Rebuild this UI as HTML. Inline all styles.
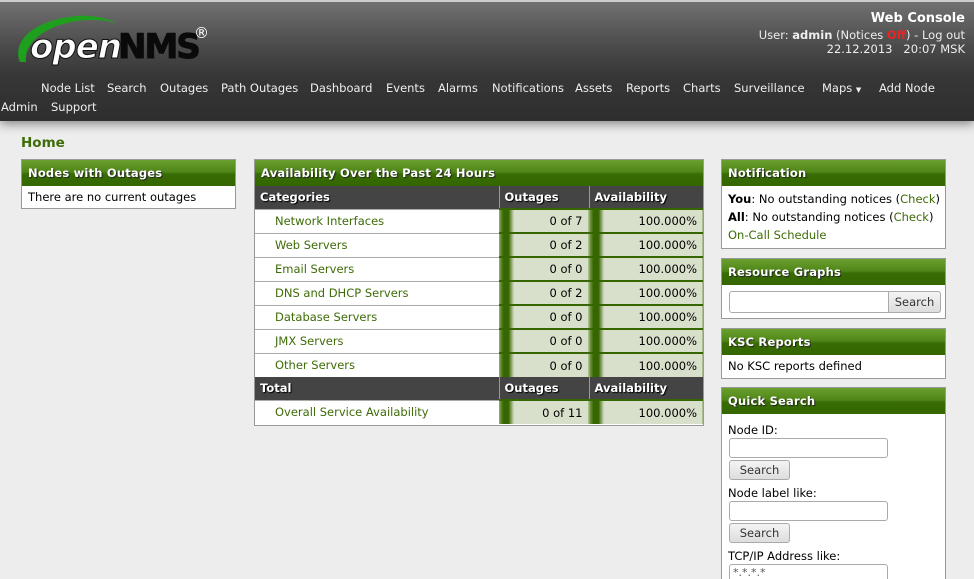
<!DOCTYPE html>
<html><head><meta charset="utf-8">
<style>
*{box-sizing:border-box}
html,body{margin:0;width:974px;height:579px;overflow:hidden}
body{background:#ededed;font-family:"DejaVu Sans","Liberation Sans",sans-serif;font-size:11.5px;color:#000;position:relative}
.hdr{position:absolute;left:0;top:0;width:974px;height:121px;background:linear-gradient(#717171 0,#4a4a4a 45px,#363636 75px,#2e2e2e 121px);border-top:2px solid #ccc;box-shadow:0 3px 10px rgba(0,0,0,.45)}
.a{position:absolute;white-space:nowrap}
.nav{color:#eee;font-size:11.5px}
.box{position:absolute;background:#fff;border:1px solid #999;overflow:hidden}
.tt{height:26px;background:linear-gradient(#6b9f2e 0,#4f8618 12px,#386c05 14px,#356600 26px);color:#fff;font-weight:bold;font-size:11.5px;padding:6px 0 0 6px;text-shadow:1px 1px 1px #222;letter-spacing:.2px}
.g{color:#3e6b06}
table{border-collapse:collapse;width:100%}
td{padding:0;height:24px;border-top:1px solid #aaa;font-size:11.5px}
th{background:#444;color:#fff;text-align:left;font-size:11.5px;height:23px;padding:0 0 0 5px;border-left:1px solid #999;text-shadow:1px 1px 1px #000}
th:first-child{border-left:none}
td.n{padding-left:20px;color:#3e6b06}
td.s{background:linear-gradient(90deg,#7fa050 0,#356600 4px,#356600 9px,#c8d4b4 14px,#d8e0cc 15px);text-align:right;padding-right:6px;border-left:1px solid #999;border-top:2px solid #356600}
input.t{position:absolute;height:20px;border:1px solid #aaa;border-radius:3px;background:#fff}
.btn{position:absolute;height:20px;border:1px solid #aaa;border-radius:3px;background:linear-gradient(#f4f4f4,#ddd);font-size:11.5px;color:#333;text-align:center;line-height:18px}
</style></head><body>
<div class="hdr"></div>
<svg class="a" style="left:12px;top:12px" width="210" height="55" viewBox="0 0 210 55">
<path d="M8 50 C0 30 20 8 65 4 C80 3 95 6 105 11 C90 7 70 7 55 11 C30 17 12 32 14 50 Z" fill="#1ea01e"/>
<text x="18" y="46" font-family="DejaVu Sans" font-weight="bold" font-style="italic" font-size="34" fill="#fff" stroke="#111" stroke-width="1" letter-spacing="-1">open</text>
<text x="106" y="46" font-family="DejaVu Sans" font-weight="bold" font-size="34" fill="#0a0a0a" stroke="#0a0a0a" stroke-width="1" letter-spacing="-2">NMS</text>
<text x="182" y="26" font-family="DejaVu Sans" font-size="15" fill="#fff">®</text>
</svg>
<div class="a" style="right:9px;top:11px;color:#fff;font-weight:bold;font-size:13px">Web Console</div>
<div class="a" style="right:9px;top:28px;color:#eee">User: <b>admin</b> (Notices <b style="color:#e22">Off</b>) - Log out</div>
<div class="a" style="right:9px;top:42px;color:#eee">22.12.2013 &nbsp; 20:07 MSK</div>
<div class="a nav" style="left:41px;top:81px">Node List</div>
<div class="a nav" style="left:107px;top:81px">Search</div>
<div class="a nav" style="left:160px;top:81px">Outages</div>
<div class="a nav" style="left:221px;top:81px">Path Outages</div>
<div class="a nav" style="left:310px;top:81px">Dashboard</div>
<div class="a nav" style="left:386px;top:81px">Events</div>
<div class="a nav" style="left:438px;top:81px">Alarms</div>
<div class="a nav" style="left:492px;top:81px">Notifications</div>
<div class="a nav" style="left:575px;top:81px">Assets</div>
<div class="a nav" style="left:626px;top:81px">Reports</div>
<div class="a nav" style="left:683px;top:81px">Charts</div>
<div class="a nav" style="left:734px;top:81px">Surveillance</div>
<div class="a nav" style="left:822px;top:81px">Maps <span style="font-size:7px">▼</span></div>
<div class="a nav" style="left:879px;top:81px">Add Node</div>
<div class="a nav" style="left:1px;top:100px">Admin</div>
<div class="a nav" style="left:51px;top:100px">Support</div>

<div class="a" style="left:21px;top:135px;font-weight:bold;font-size:13.5px;color:#3e6b06">Home</div>

<div class="box" style="left:21px;top:159px;width:215px;height:50px"><div class="tt">Nodes with Outages</div><div style="padding:4px 6px">There are no current outages</div></div>

<div class="box" style="left:254px;top:159px;width:450px;height:267px"><div class="tt">Availability Over the Past 24 Hours</div>
<table>
<tr><th style="width:244px">Categories</th><th style="width:90px">Outages</th><th>Availability</th></tr>
<tr><td class="n">Network Interfaces</td><td class="s">0 of 7</td><td class="s">100.000%</td></tr>
<tr><td class="n">Web Servers</td><td class="s">0 of 2</td><td class="s">100.000%</td></tr>
<tr><td class="n">Email Servers</td><td class="s">0 of 0</td><td class="s">100.000%</td></tr>
<tr><td class="n">DNS and DHCP Servers</td><td class="s">0 of 2</td><td class="s">100.000%</td></tr>
<tr><td class="n">Database Servers</td><td class="s">0 of 0</td><td class="s">100.000%</td></tr>
<tr><td class="n">JMX Servers</td><td class="s">0 of 0</td><td class="s">100.000%</td></tr>
<tr><td class="n">Other Servers</td><td class="s">0 of 0</td><td class="s">100.000%</td></tr>
<tr><th>Total</th><th>Outages</th><th>Availability</th></tr>
<tr><td class="n">Overall Service Availability</td><td class="s">0 of 11</td><td class="s">100.000%</td></tr>
</table></div>

<div class="box" style="left:721px;top:159px;width:225px;height:90px"><div class="tt">Notification</div>
<div style="padding:4px 6px;line-height:18px;white-space:nowrap"><b>You</b>: No outstanding notices (<span class="g">Check</span>)<br><b>All</b>: No outstanding notices (<span class="g">Check</span>)<br><span class="g">On-Call Schedule</span></div></div>

<div class="box" style="left:721px;top:258px;width:225px;height:61px"><div class="tt">Resource Graphs</div>
<input class="t" style="left:7px;top:32px;width:160px;height:22px;border-radius:3px 0 0 3px">
<div class="btn" style="left:166px;top:32px;width:53px;height:22px;border-radius:0 3px 3px 0;line-height:20px">Search</div></div>

<div class="box" style="left:721px;top:328px;width:225px;height:51px"><div class="tt">KSC Reports</div><div style="padding:4px 6px">No KSC reports defined</div></div>

<div class="box" style="left:721px;top:387px;width:225px;height:200px"><div class="tt">Quick Search</div>
<div class="a" style="left:6px;top:35px">Node ID:</div>
<input class="t" style="left:7px;top:50px;width:159px">
<div class="btn" style="left:7px;top:72px;width:61px">Search</div>
<div class="a" style="left:6px;top:98px">Node label like:</div>
<input class="t" style="left:7px;top:113px;width:159px">
<div class="btn" style="left:7px;top:135px;width:61px">Search</div>
<div class="a" style="left:6px;top:161px">TCP/IP Address like:</div>
<input class="t" style="left:7px;top:176px;width:159px">
<div class="a" style="left:11px;top:178px;color:#555;font-size:11px">*.*.*.*</div>
</div>
</body></html>
